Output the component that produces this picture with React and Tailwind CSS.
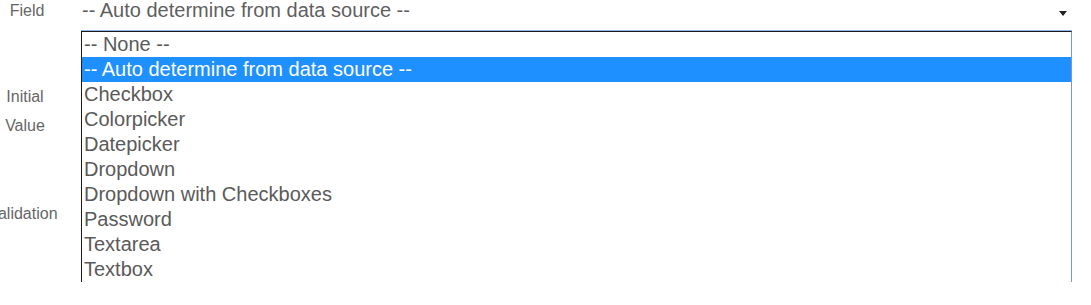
import React from 'react';

const options = [
  '-- None --',
  '-- Auto determine from data source --',
  'Checkbox',
  'Colorpicker',
  'Datepicker',
  'Dropdown',
  'Dropdown with Checkboxes',
  'Password',
  'Textarea',
  'Textbox',
];

const App = () => {
  const selected = 1;

  return (
    <div className="relative w-[1091px] h-[305px] bg-white overflow-hidden font-['Liberation_Sans',Arial,sans-serif]">
      {/* Form rows */}
      <div className="flex flex-col">
        <div className="flex h-[30px] items-center">
          <div className="w-[54px] -mt-[8px] text-center text-[16px] text-[#666] whitespace-nowrap">Field</div>
          <div className="ml-[28px] flex flex-1 items-center pr-[24px]">
            <span className="flex-1 text-[20px] text-[#5f5f5f] leading-none -mt-[10px]">
              -- Auto determine from data source --
            </span>
            <span className="-mt-[4px] w-0 h-0 border-l-[4px] border-r-[4px] border-t-[5px] border-l-transparent border-r-transparent border-t-[#222]" />
          </div>
        </div>
        <div className="flex mt-[52px]">
          <div className="w-[50px] text-center text-[16px] text-[#666] leading-[29px]">
            Initial
            <br />
            Value
          </div>
        </div>
        <div className="flex mt-[62px]">
          <div className="w-[50px] -ml-[2px] flex justify-center text-[16px] text-[#666] whitespace-nowrap">
            <span>Validation</span>
          </div>
        </div>
      </div>

      {/* Open dropdown list */}
      <div className="absolute left-[81px] top-[30px] w-[991px] border-t border-t-[#8fb4ea]">
        <div className="border-t border-l border-r border-t-[#1b1b1b] border-l-[#1b1b1b] border-r-[#7b96d4]">
          {options.map((opt, i) => (
            <div
              key={opt}
              className={
                i === selected
                  ? 'h-[25px] pl-[2px] text-[20px] leading-[25px] bg-[#1e90ff] text-white whitespace-nowrap'
                  : 'h-[25px] pl-[2px] text-[20px] leading-[25px] text-[#5a5a5a] whitespace-nowrap'
              }
            >
              {opt}
            </div>
          ))}
        </div>
      </div>
    </div>
  );
};

export default App;
